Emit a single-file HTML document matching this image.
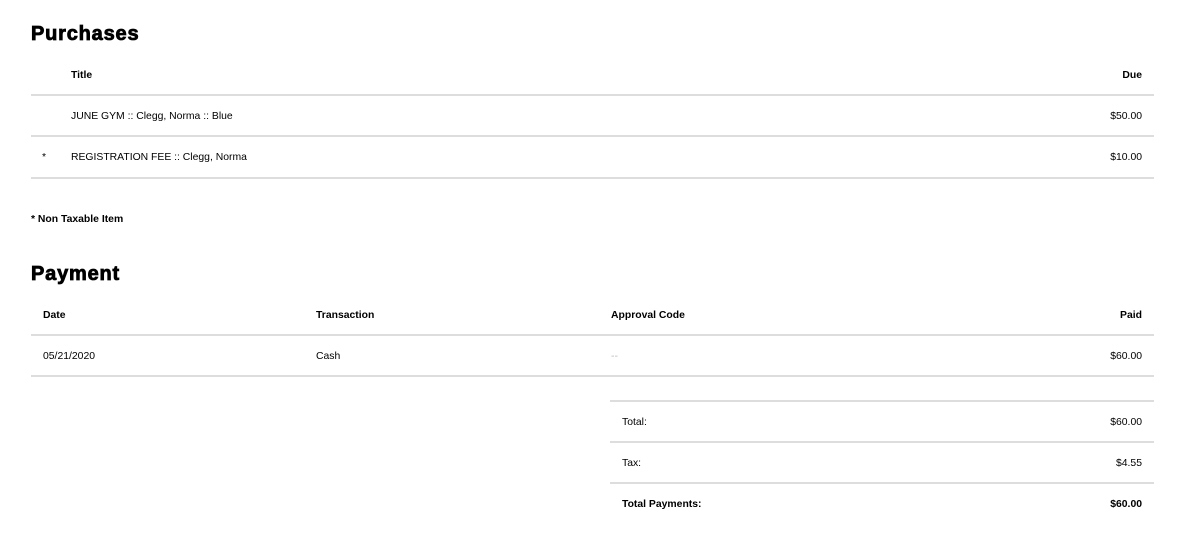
<!DOCTYPE html><html><head><style>
body{margin:0;width:1181px;height:541px;background:#fff;font-family:"Liberation Sans",Arial,sans-serif;color:#000;position:relative;overflow:hidden}
div{position:absolute;white-space:nowrap}
.h{font-size:20px;font-weight:bold;letter-spacing:0.8px;-webkit-text-stroke:0.8px #000}
.t{font-size:10.4px;line-height:12px}
.b{font-weight:bold}
.r{text-align:right}
.l{height:2px;background:#ddd}
</style></head><body>
<div class="h" style="left:31px;top:23px">Purchases</div>
<div class="t b" style="left:71px;top:70px">Title</div>
<div class="t b r" style="right:39px;top:70px">Due</div>
<div class="l" style="left:31px;width:1123px;top:94px"></div>
<div class="t" style="left:71px;top:111px">JUNE GYM :: Clegg, Norma :: Blue</div>
<div class="t r" style="right:39px;top:111px">$50.00</div>
<div class="l" style="left:31px;width:1123px;top:135px"></div>
<div class="t" style="left:42px;top:152px">*</div>
<div class="t" style="left:71px;top:152px">REGISTRATION FEE :: Clegg, Norma</div>
<div class="t r" style="right:39px;top:152px">$10.00</div>
<div class="l" style="left:31px;width:1123px;top:177px"></div>
<div class="t b" style="left:31px;top:214px">* Non Taxable Item</div>
<div class="h" style="left:31px;top:263px">Payment</div>
<div class="t b" style="left:43px;top:310px">Date</div>
<div class="t b" style="left:316px;top:310px">Transaction</div>
<div class="t b" style="left:611px;top:310px">Approval Code</div>
<div class="t b r" style="right:39px;top:310px">Paid</div>
<div class="l" style="left:31px;width:1123px;top:334px"></div>
<div class="t" style="left:43px;top:351px">05/21/2020</div>
<div class="t" style="left:316px;top:351px">Cash</div>
<div class="t" style="left:611px;top:351px;color:#bbb">--</div>
<div class="t r" style="right:39px;top:351px">$60.00</div>
<div class="l" style="left:31px;width:1123px;top:375px"></div>
<div class="l" style="left:610px;width:544px;top:400px"></div>
<div class="t" style="left:622px;top:417px">Total:</div>
<div class="t r" style="right:39px;top:417px">$60.00</div>
<div class="l" style="left:610px;width:544px;top:441px"></div>
<div class="t" style="left:622px;top:458px">Tax:</div>
<div class="t r" style="right:39px;top:458px">$4.55</div>
<div class="l" style="left:610px;width:544px;top:482px"></div>
<div class="t b" style="left:622px;top:499px">Total Payments:</div>
<div class="t b r" style="right:39px;top:499px">$60.00</div>
</body></html>
